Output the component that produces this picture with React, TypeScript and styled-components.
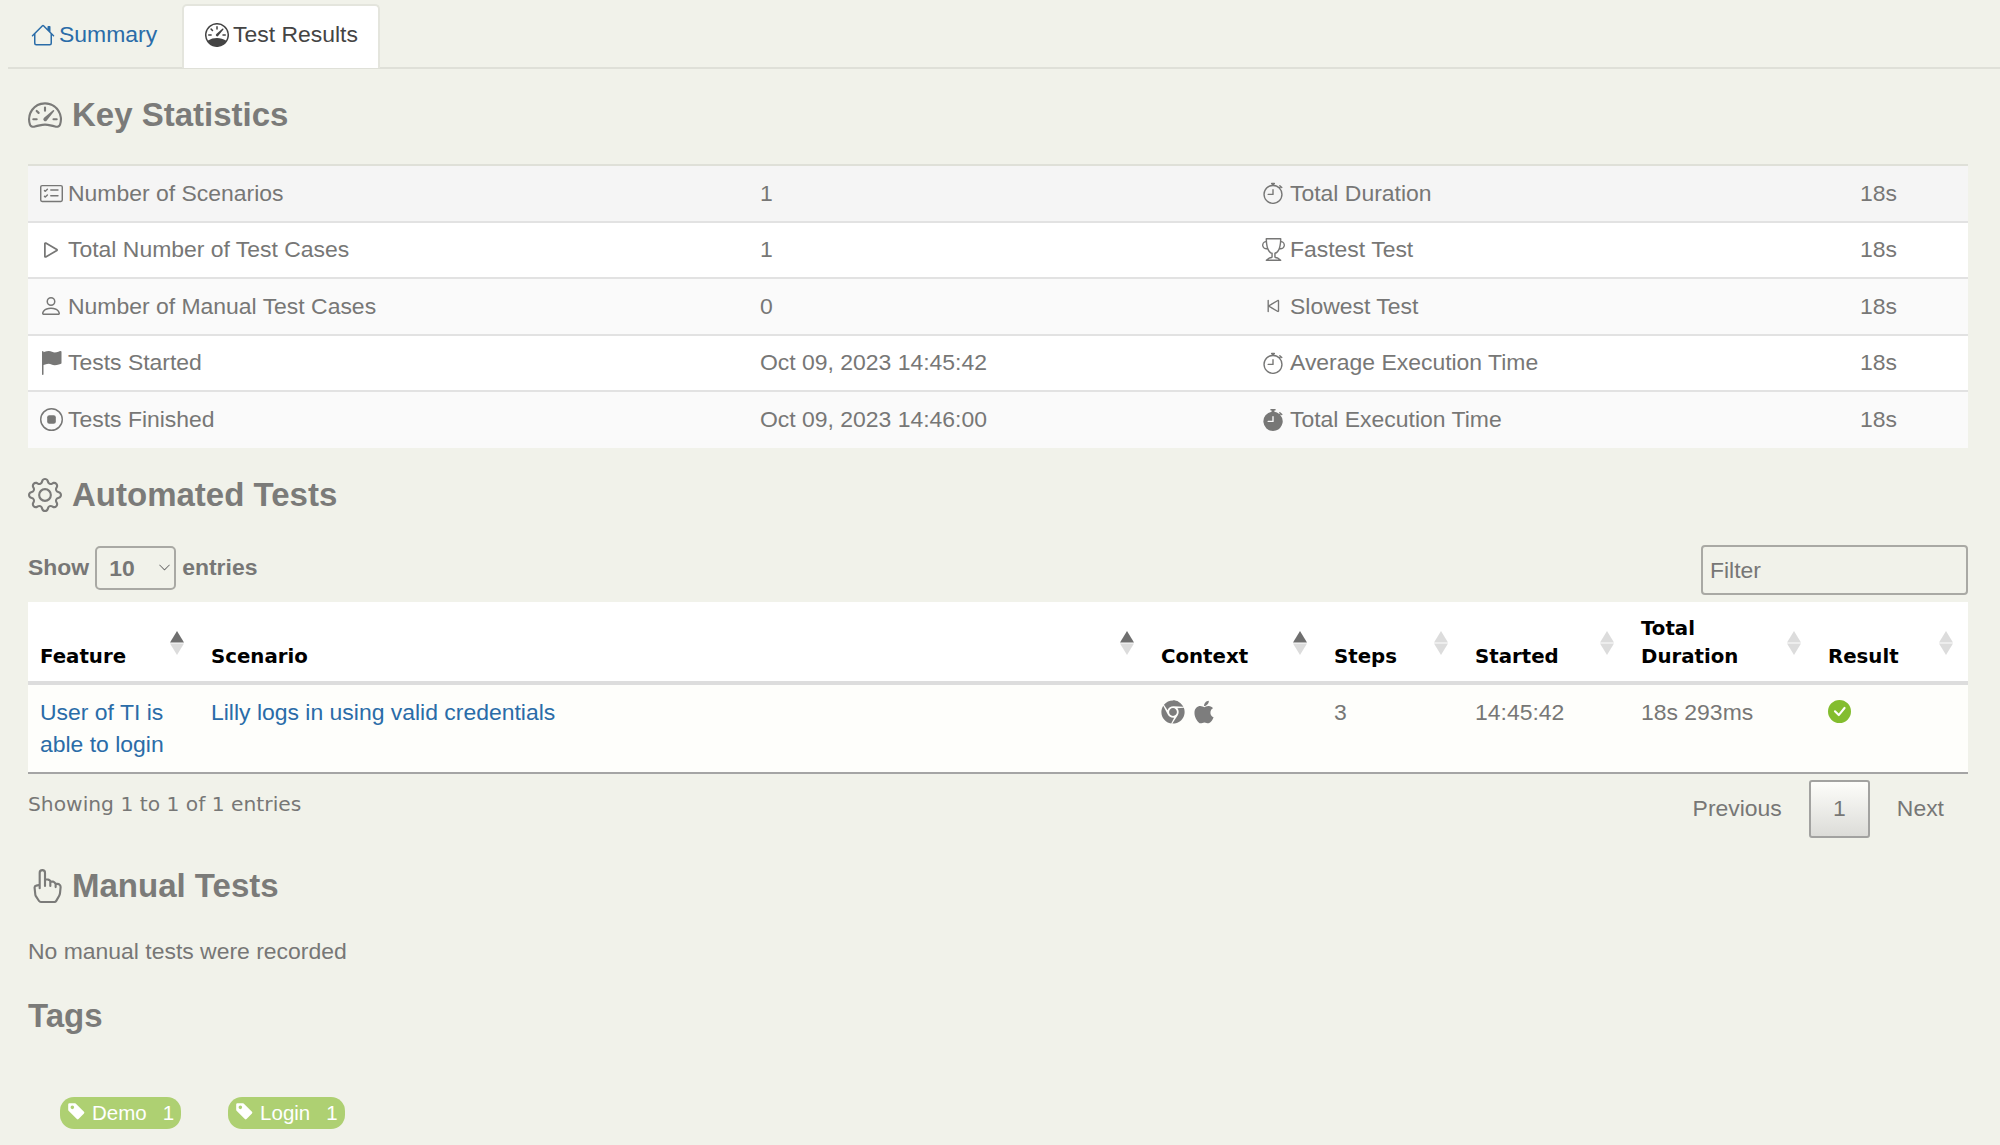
import styled, { createGlobalStyle } from "styled-components";
import {
  BsHouse,
  BsSpeedometer,
  BsSpeedometer2,
  BsCardChecklist,
  BsPlay,
  BsPerson,
  BsFlagFill,
  BsStopCircle,
  BsStopwatch,
  BsStopwatchFill,
  BsTrophy,
  BsSkipStart,
  BsGear,
  BsHandIndex,
  BsTagFill,
  BsCheckCircleFill,
  BsChevronDown,
} from "react-icons/bs";
import { FaChrome, FaApple } from "react-icons/fa";
import type { ReactNode } from "react";

const GlobalStyle = createGlobalStyle`
  html, body {
    margin: 0;
    padding: 0;
    background: #f1f2ea;
  }
  body {
    font-family: "Liberation Sans", Arial, sans-serif;
    font-size: 22.95px;
    color: #777776;
  }
`;

const Page = styled.div`
  height: 1145px;
  overflow: hidden;
  padding-top: 4px;
  box-sizing: border-box;
`;

const TabBar = styled.nav`
  display: flex;
  align-items: stretch;
  height: 63px;
  margin-left: 8px;
  border-bottom: 2px solid #dfe0d8;
`;

const Tab = styled.a<{ $active?: boolean }>`
  display: flex;
  align-items: center;
  gap: 4px;
  padding: 0 20px 5px 21px;
  height: 64px;
  box-sizing: border-box;
  text-decoration: none;
  color: ${(p) => (p.$active ? "#444" : "#2a6ca8")};
  background: ${(p) => (p.$active ? "#fff" : "transparent")};
  border-radius: 5px 5px 0 0;
  border: 2px solid ${(p) => (p.$active ? "#e4e5dd" : "transparent")};
  border-bottom: 0;
  &:first-child {
    width: 174px;
  }
`;

const Content = styled.main`
  padding: 0 32px 0 28px;
`;

const Heading = styled.h2<{ $top: number; $bottom: number }>`
  display: flex;
  align-items: center;
  gap: 10px;
  margin: ${(p) => p.$top}px 0 ${(p) => p.$bottom}px;
  height: 40px;
  font-size: 33px;
  font-weight: bold;
  color: #7b7b79;
  svg {
    flex: none;
  }
`;

const StatsTable = styled.table`
  width: 1940px;
  table-layout: fixed;
  border-collapse: collapse;
  border-top: 2px solid #dfe0d8;

  tr {
    height: 56.5px;
    border-bottom: 2px solid #e2e2e2;
  }
  tr:last-child {
    border-bottom: 0;
  }
  tr:nth-child(odd) {
    background: #fafafa;
  }
  tr:nth-child(even) {
    background: #fff;
  }
  tr:first-child {
    background: #f5f5f5;
  }
  td {
    padding: 0;
  }
`;

const StatLabel = styled.span`
  display: flex;
  align-items: center;
  gap: 3px;
  padding-left: 9px;
`;

const StatIcon = styled.span`
  display: flex;
  justify-content: center;
  align-items: center;
  width: 28px;
  height: 28px;
  flex: none;
`;

const ToolRow = styled.div`
  display: flex;
  justify-content: space-between;
  align-items: center;
  height: 50px;
  margin-bottom: 6px;
`;

const Length = styled.label`
  display: flex;
  align-items: center;
  gap: 6px;
  font-weight: bold;
  margin-top: -6px;
`;

const SelectWrap = styled.span`
  position: relative;
  display: block;
  svg {
    position: absolute;
    right: 5px;
    top: 15px;
    pointer-events: none;
    color: #666;
  }
`;

const Select = styled.select`
  appearance: none;
  display: block;
  width: 81px;
  height: 44px;
  padding: 0 0 0 12px;
  font: bold 22.95px "Liberation Sans", Arial, sans-serif;
  color: #777776;
  background: transparent;
  border: 2px solid #a9a9a4;
  border-radius: 5px;
`;

const FilterInput = styled.input`
  width: 267px;
  height: 50px;
  box-sizing: border-box;
  padding: 0 7px;
  margin-top: -1px;
  font: 22.95px "Liberation Sans", Arial, sans-serif;
  background: transparent;
  border: 2px solid #a9a9a4;
  border-radius: 4px;
  &::placeholder {
    color: #777776;
    opacity: 1;
  }
`;

const DataTable = styled.table`
  width: 1940px;
  table-layout: fixed;
  border-collapse: collapse;
  border-bottom: 2px solid #a5a5a5;
`;

const HeadRow = styled.tr`
  height: 81px;
  background: #fff;
  border-bottom: 4px solid #dddddd;
`;

const Th = styled.th<{ $width: number }>`
  position: relative;
  width: ${(p) => p.$width}px;
  box-sizing: border-box;
  padding: 0 30px 10px 12px;
  vertical-align: bottom;
  text-align: left;
  font: bold 19.75px/28px "DejaVu Sans", Verdana, sans-serif;
  color: #000;
`;

const SortMark = styled.svg`
  position: absolute;
  right: 15px;
  top: 28px;
`;

const BodyRow = styled.tr`
  background: #fefefb;
`;

const Td = styled.td`
  padding: 11px 12px 12px;
  vertical-align: top;
  line-height: 32px;
`;

const Link = styled.a`
  color: #2a6ca8;
  text-decoration: none;
`;

const ContextIcons = styled.span`
  display: flex;
  align-items: center;
  gap: 6px;
  height: 32px;
  color: #7d7d7d;
`;

const ResultIcon = styled.span`
  display: flex;
  align-items: center;
  height: 32px;
  color: #83bd2e;
`;

const Footer = styled.div`
  display: flex;
  justify-content: space-between;
  margin-top: 6px;
  height: 58px;
`;

const Info = styled.span`
  font: 20.25px/24px "DejaVu Sans", Verdana, sans-serif;
  margin-top: 12px;
`;

const Pager = styled.div`
  display: flex;
  align-items: center;
  padding-right: 24px;
`;

const PageLink = styled.span`
  color: #777776;
`;

const PageCurrent = styled.span`
  display: flex;
  justify-content: center;
  align-items: center;
  width: 61px;
  height: 58px;
  margin: 0 27px;
  box-sizing: border-box;
  border: 2px solid #a2a2a0;
  border-radius: 3px;
  background: linear-gradient(#fdfdfa, #dcdcd8);
`;

const Plain = styled.p`
  margin: 29px 0 0;
  line-height: 32px;
`;

const Tags = styled.div`
  display: flex;
  gap: 47px;
  margin: 61px 0 0 32px;
`;

const Tag = styled.span`
  display: flex;
  align-items: center;
  height: 32px;
  padding: 0 7px;
  box-sizing: border-box;
  border-radius: 14px;
  background: #aed072;
  color: #fff;
  font-size: 20.5px;
  svg {
    margin-right: 6px;
    margin-top: -3px;
  }
`;

const TagCount = styled.span`
  margin-left: 16px;
`;

function Sort({ up }: { up?: boolean }) {
  return (
    <SortMark width="14" height="26" viewBox="0 0 14 26">
      <path d="M7 1 L14 12.5 H0 Z" fill={up ? "#6f6f6f" : "#dcdcdc"} />
      <path d="M7 25 L14 13.5 H0 Z" fill="#dcdcdc" />
    </SortMark>
  );
}

function Stat({ icon, children }: { icon: ReactNode; children: ReactNode }) {
  return (
    <StatLabel>
      <StatIcon>{icon}</StatIcon>
      {children}
    </StatLabel>
  );
}

const stats: [ReactNode, string, string, ReactNode, string][] = [
  [<BsCardChecklist size={23} />, "Number of Scenarios", "1", <BsStopwatch size={22} />, "Total Duration"],
  [<BsPlay size={30} />, "Total Number of Test Cases", "1", <BsTrophy size={23} />, "Fastest Test"],
  [<BsPerson size={24} />, "Number of Manual Test Cases", "0", <BsSkipStart size={22} />, "Slowest Test"],
  [<BsFlagFill size={24} />, "Tests Started", "Oct 09, 2023 14:45:42", <BsStopwatch size={22} />, "Average Execution Time"],
  [<BsStopCircle size={23} />, "Tests Finished", "Oct 09, 2023 14:46:00", <BsStopwatchFill size={22} />, "Total Execution Time"],
];

const columns: { label: ReactNode; width: number; up?: boolean }[] = [
  { label: "Feature", width: 171, up: true },
  { label: "Scenario", width: 950, up: true },
  { label: "Context", width: 173, up: true },
  { label: "Steps", width: 141 },
  { label: "Started", width: 166 },
  { label: "Total Duration", width: 187 },
  { label: "Result", width: 152 },
];

export default function App() {
  return (
    <Page>
      <GlobalStyle />
      <TabBar>
        <Tab href="#">
          <BsHouse size={24} />
          Summary
        </Tab>
        <Tab href="#" $active>
          <BsSpeedometer size={24} />
          Test Results
        </Tab>
      </TabBar>
      <Content>
        <Heading $top={26} $bottom={29}>
          <BsSpeedometer2 size={34} />
          Key Statistics
        </Heading>
        <StatsTable>
          <colgroup>
            <col width="732" />
            <col width="490" />
            <col width="610" />
            <col width="108" />
          </colgroup>
          <tbody>
            {stats.map((s) => (
              <tr key={s[1]}>
                <td>
                  <Stat icon={s[0]}>{s[1]}</Stat>
                </td>
                <td>{s[2]}</td>
                <td>
                  <Stat icon={s[3]}>{s[4]}</Stat>
                </td>
                <td>18s</td>
              </tr>
            ))}
          </tbody>
        </StatsTable>
        <Heading $top={27} $bottom={31}>
          <BsGear size={34} />
          Automated Tests
        </Heading>
        <ToolRow>
          <Length>
            Show
            <SelectWrap>
              <Select defaultValue="10">
                <option>10</option>
              </Select>
              <BsChevronDown size={13} />
            </SelectWrap>
            entries
          </Length>
          <FilterInput placeholder="Filter" />
        </ToolRow>
        <DataTable>
          <thead>
            <HeadRow>
              {columns.map((c, i) => (
                <Th key={i} $width={c.width}>
                  {c.label}
                  <Sort up={c.up} />
                </Th>
              ))}
            </HeadRow>
          </thead>
          <tbody>
            <BodyRow>
              <Td>
                <Link href="#">User of TI is able to login</Link>
              </Td>
              <Td>
                <Link href="#">Lilly logs in using valid credentials</Link>
              </Td>
              <Td>
                <ContextIcons>
                  <FaChrome size={24} />
                  <FaApple size={26} />
                </ContextIcons>
              </Td>
              <Td>3</Td>
              <Td>14:45:42</Td>
              <Td>18s 293ms</Td>
              <Td>
                <ResultIcon>
                  <BsCheckCircleFill size={23} />
                </ResultIcon>
              </Td>
            </BodyRow>
          </tbody>
        </DataTable>
        <Footer>
          <Info>Showing 1 to 1 of 1 entries</Info>
          <Pager>
            <PageLink>Previous</PageLink>
            <PageCurrent>1</PageCurrent>
            <PageLink>Next</PageLink>
          </Pager>
        </Footer>
        <Heading $top={28} $bottom={0}>
          <BsHandIndex size={34} />
          Manual Tests
        </Heading>
        <Plain>No manual tests were recorded</Plain>
        <Heading $top={29} $bottom={0}>
          Tags
        </Heading>
        <Tags>
          <Tag>
            <BsTagFill size={19} />
            Demo
            <TagCount>1</TagCount>
          </Tag>
          <Tag>
            <BsTagFill size={19} />
            Login
            <TagCount>1</TagCount>
          </Tag>
        </Tags>
      </Content>
    </Page>
  );
}
